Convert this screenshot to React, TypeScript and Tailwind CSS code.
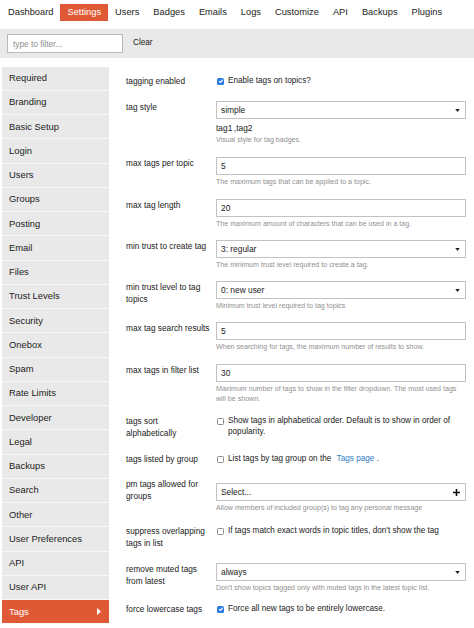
import React from 'react';

const navItems = ['Dashboard', 'Settings', 'Users', 'Badges', 'Emails', 'Logs', 'Customize', 'API', 'Backups', 'Plugins'];

const categories = [
  'Required', 'Branding', 'Basic Setup', 'Login', 'Users', 'Groups', 'Posting', 'Email', 'Files',
  'Trust Levels', 'Security', 'Onebox', 'Spam', 'Rate Limits', 'Developer', 'Legal', 'Backups',
  'Search', 'Other', 'User Preferences', 'API', 'User API', 'Tags',
];

const Checkbox: React.FC<{ checked?: boolean }> = ({ checked }) =>
  checked ? (
    <span className="mt-[2.5px] mr-[4px] ml-[1px] flex h-[7px] w-[7px] shrink-0 items-center justify-center rounded-[1.5px] bg-[#2b7be0]">
      <svg viewBox="0 0 8 8" className="h-[6px] w-[6px]">
        <path d="M1.6 4.1 3.3 5.8 6.5 2.1" fill="none" stroke="#fff" strokeWidth="1.5" />
      </svg>
    </span>
  ) : (
    <span className="mt-[2.5px] mr-[4px] ml-[1px] h-[7px] w-[7px] shrink-0 rounded-[1.5px] border border-[#8a8a8a] bg-white" />
  );

const Box: React.FC<{ value: string; icon?: 'caret' | 'plus' }> = ({ value, icon }) => (
  <div className="flex h-[18px] items-center justify-between border border-[#c2c2c2] bg-white pl-[4px] pr-[5px] text-[8.4px] text-[#222]">
    <span>{value}</span>
    {icon === 'caret' && (
      <svg viewBox="0 0 6 4" className="h-[3px] w-[5px]">
        <polygon points="0,0 6,0 3,4" fill="#222" />
      </svg>
    )}
    {icon === 'plus' && (
      <svg viewBox="0 0 8 8" className="h-[7px] w-[7px]">
        <rect x="3.1" y="0" width="1.8" height="8" fill="#111" />
        <rect x="0" y="3.1" width="8" height="1.8" fill="#111" />
      </svg>
    )}
  </div>
);

const Help: React.FC<{ children: React.ReactNode }> = ({ children }) => (
  <div className="mt-[2px] text-[7.1px] leading-[10px] text-[#909090]">{children}</div>
);

const Row: React.FC<{ label: React.ReactNode; className?: string; children: React.ReactNode }> = ({ label, className = '', children }) => (
  <div className={`flex ${className}`}>
    <div className="mr-[2px] w-[88px] shrink-0 text-[8.3px] leading-[12px] text-[#222]">{label}</div>
    <div className="min-w-0 flex-1">{children}</div>
  </div>
);

const CheckText: React.FC<{ checked?: boolean; children: React.ReactNode }> = ({ checked, children }) => (
  <div className="flex items-start text-[8.2px] leading-[11px] text-[#222]">
    <Checkbox checked={checked} />
    <span>{children}</span>
  </div>
);

export default function App() {
  return (
    <div className="min-h-screen w-[474px] bg-white font-['Liberation_Sans',Arial,sans-serif] text-[#222]">
      {/* Top nav */}
      <div className="flex pl-[1px] pt-[4px] pb-[8px]">
        {navItems.map((item) => (
          <div
            key={item}
            className={`h-[17px] px-[7px] text-[9.3px] leading-[17px] ${item === 'Settings' ? 'bg-[#df5a34] text-white' : 'text-[#222]'}`}
          >
            {item}
          </div>
        ))}
      </div>

      {/* Filter bar */}
      <div className="flex h-[29px] items-center bg-[#e9e9e9] px-[7px]">
        <input
          readOnly
          placeholder="type to filter..."
          className="h-[19px] w-[116px] border border-[#b8b8b8] bg-white pl-[5px] text-[8.3px] outline-none placeholder:text-[#8d8d8d]"
        />
        <span className="ml-[10px] text-[8.2px] text-[#222]">Clear</span>
      </div>

      <div className="flex">
        {/* Sidebar */}
        <div className="mt-[8.5px] ml-[2px] w-[107px] shrink-0">
          {categories.map((cat) => (
            <div
              key={cat}
              className={`flex h-[24.25px] items-center justify-between border-b border-[#f7f7f7] pl-[7px] pr-[8px] text-[9.4px] ${
                cat === 'Tags' ? 'bg-[#df5a34] text-white' : 'bg-[#e9e9e9] text-[#222]'
              }`}
            >
              <span>{cat}</span>
              {cat === 'Tags' && (
                <svg viewBox="0 0 4 7" className="h-[7px] w-[4px]">
                  <polygon points="0,0 4,3.5 0,7" fill="#fff" />
                </svg>
              )}
            </div>
          ))}
        </div>

        {/* Settings */}
        <div className="flex-1 pl-[17px] pr-[8px] pt-[17px]">
          <Row label="tagging enabled">
            <CheckText checked>Enable tags on topics?</CheckText>
          </Row>

          <Row label="tag style" className="mt-[14px]">
            <Box value="simple" icon="caret" />
            <div className="mt-[4px] text-[8.4px] leading-[10px] text-[#222]">
              tag1<span className="ml-[1.5px]">,</span>tag2
            </div>
            <Help>Visual style for tag badges.</Help>
          </Row>

          <Row label="max tags per topic" className="mt-[12px]">
            <Box value="5" />
            <Help>The maximum tags that can be applied to a topic.</Help>
          </Row>

          <Row label="max tag length" className="mt-[12px]">
            <Box value="20" />
            <Help>The maximum amount of characters that can be used in a tag.</Help>
          </Row>

          <Row label="min trust to create tag" className="mt-[11px]">
            <Box value="3: regular" icon="caret" />
            <Help>The minimum trust level required to create a tag.</Help>
          </Row>

          <Row label="min trust level to tag topics" className="mt-[11px]">
            <Box value="0: new user" icon="caret" />
            <Help>Minimum trust level required to tag topics</Help>
          </Row>

          <Row label="max tag search results" className="mt-[11px]">
            <Box value="5" />
            <Help>When searching for tags, the maximum number of results to show.</Help>
          </Row>

          <Row label="max tags in filter list" className="mt-[12px]">
            <Box value="30" />
            <Help>
              Maximum number of tags to show in the filter dropdown. The most used tags will be shown.
            </Help>
          </Row>

          <Row
            label={
              <>
                tags sort
                <br />
                alphabetically
              </>
            }
            className="mt-[11px]"
          >
            <CheckText>Show tags in alphabetical order. Default is to show in order of popularity.</CheckText>
          </Row>

          <Row label="tags listed by group" className="mt-[14px]">
            <CheckText>
              List tags by tag group on the <a className="ml-[3px] text-[#2f7cc3]">Tags page</a> .
            </CheckText>
          </Row>

          <Row label="pm tags allowed for groups" className="mt-[13px]">
            <div className="mt-[5px]">
              <Box value="Select..." icon="plus" />
            </div>
            <Help>Allow members of included group(s) to tag any personal message</Help>
          </Row>

          <Row label="suppress overlapping tags in list" className="mt-[12px]">
            <CheckText>If tags match exact words in topic titles, don't show the tag</CheckText>
          </Row>

          <Row label="remove muted tags from latest" className="mt-[14px]">
            <Box value="always" icon="caret" />
            <Help>Don't show topics tagged only with muted tags in the latest topic list.</Help>
          </Row>

          <Row label="force lowercase tags" className="mt-[10px]">
            <CheckText checked>Force all new tags to be entirely lowercase.</CheckText>
          </Row>
        </div>
      </div>
    </div>
  );
}
